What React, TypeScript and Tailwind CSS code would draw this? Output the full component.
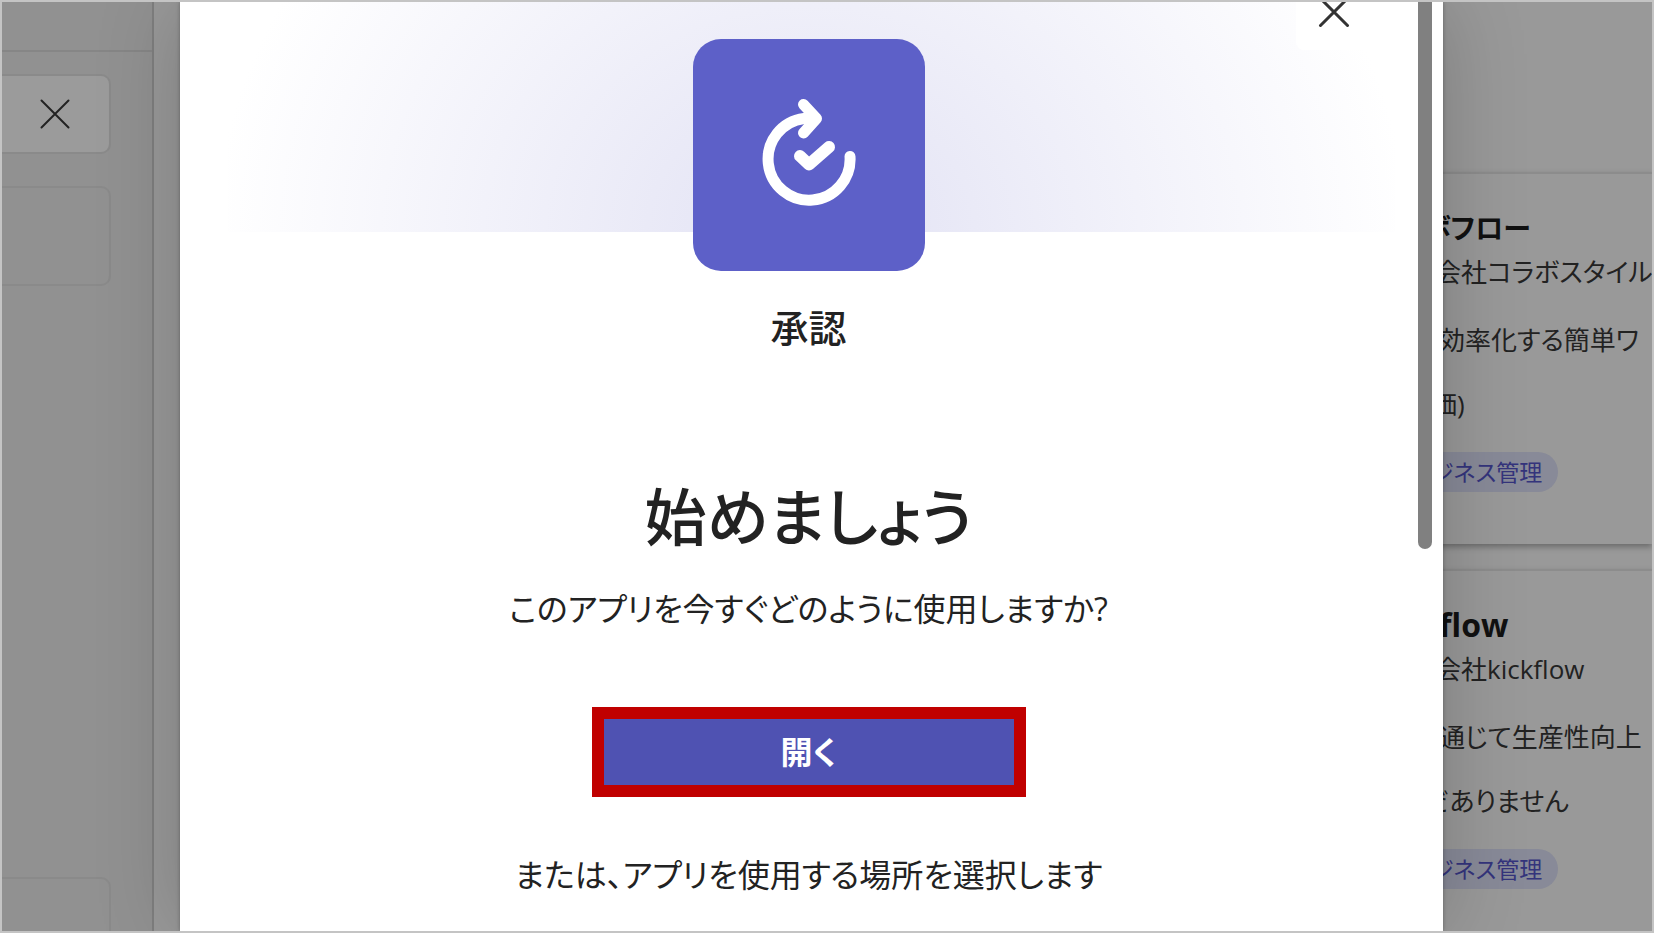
import React from 'react';
import clsx from 'clsx';

type AppCard = {
  name: string;
  nameClass: string;
  org: string;
  summary: string;
  rating: string;
  ratingClass: string;
  tag: string;
};

const cards: AppCard[] = [
  {
    name: 'ボフロー',
    nameClass: 'text-[28px]',
    org: '会社コラボスタイル',
    summary: '効率化する簡単ワ',
    rating: '価)',
    ratingClass: 'pl-2',
    tag: 'ジネス管理'
  },
  {
    name: 'flow',
    nameClass: 'pl-4 text-[32px]',
    org: '会社kickflow',
    summary: '通じて生産性向上',
    rating: 'だありません',
    ratingClass: '',
    tag: 'ジネス管理'
  }
];

const CloseIcon = ({ className }: { className?: string }) => (
  <svg
    viewBox="0 0 32 32"
    className={clsx('size-8', className)}
    fill="none"
    stroke="currentColor"
    strokeLinecap="round"
    aria-hidden="true"
  >
    <path d="M2.5 2.5l27 27M29.5 2.5l-27 27" />
  </svg>
);

const ApprovalsLogo = () => (
  <svg
    viewBox="0 0 232 232"
    className="relative size-[232px] rounded-[28px] bg-[#5d60c8]"
    fill="none"
    stroke="#fff"
    strokeWidth="11"
    strokeLinecap="round"
    strokeLinejoin="round"
    aria-hidden="true"
  >
    <path d="M157 117.500A41 41 0 1 1 111 79.500H120" />
    <path d="M110.500 65.500L123.500 79.500L110.500 94" />
    <path d="M107 117L116 125.500L136 108" strokeWidth="12" />
  </svg>
);

const Sidebar = () => (
  <aside className="flex w-[152px] shrink-0 flex-col border-r-2 border-[#7f7f7f] bg-[#919191]">
    <div className="h-[50px] shrink-0 border-b-2 border-[#868686]" />
    <div className="mt-[22px] flex h-20 w-[109px] shrink-0 items-center justify-end rounded-r-[10px] border-2 border-l-0 border-[#8a8a8a] bg-[#9b9b9b] pr-[38px]">
      <button type="button" aria-label="クリア" className="text-[#222]">
        <CloseIcon className="stroke-2" />
      </button>
    </div>
    <div className="mt-8 h-[100px] w-[109px] shrink-0 rounded-r-[10px] border-2 border-l-0 border-[#8a8a8a]" />
    <div className="mt-auto h-[54px] w-[109px] shrink-0 rounded-tr-[10px] border-2 border-b-0 border-l-0 border-[#8a8a8a]" />
  </aside>
);

const Card = ({ card }: { card: AppCard }) => (
  <article className="flex h-[372px] shrink-0 flex-col items-start border-t-2 border-[#8c8c8c] bg-[#999] pt-[30px] text-[26px] leading-10 whitespace-nowrap text-[#222] shadow-[0_3px_6px_rgba(0,0,0,0.3)]">
    <h3 className={clsx('leading-12 font-bold text-[#111]', card.nameClass)}>
      {card.name}
    </h3>
    <p className="pl-3">{card.org}</p>
    <p className="mt-7 pl-4">{card.summary}</p>
    <p className={clsx('mt-6', card.ratingClass)}>{card.rating}</p>
    <span className="mt-7 rounded-r-full bg-[#888a98] pr-4 pl-2 text-[23px] text-[#34347c]">
      {card.tag}
    </span>
  </article>
);

const Dialog = () => (
  <div
    role="dialog"
    aria-labelledby="app-name"
    className="absolute inset-y-0 right-[209px] left-[178px] overflow-hidden bg-white shadow-[0_0_80px_rgba(0,0,0,0.2),0_0_4px_rgba(0,0,0,0.3)]"
  >
    <div className="absolute inset-x-12 top-0 h-[230px] bg-[radial-gradient(ellipse_51%_220%_at_50%_100%,#e2e2f4,#ffffff)]" />
    <button
      type="button"
      aria-label="閉じる"
      className="absolute -top-7 right-[71px] flex size-[76px] items-center justify-center rounded-lg bg-white text-[#333]"
    >
      <CloseIcon className="stroke-3" />
    </button>
    <div className="absolute top-0 right-[11px] h-[547px] w-[14px] rounded-b-full bg-[#808080]" />

    <div className="flex flex-col items-center pt-[37px] pr-[6px] text-center text-[#222]">
      <ApprovalsLogo />
      <h1 id="app-name" className="mt-7 text-[38px] leading-14 font-medium">
        承認
      </h1>
      <h2 className="mt-[114px] text-[62px] leading-24 font-medium">
        始めましょう
      </h2>
      <p className="mt-5 text-[32px] leading-12">
        このアプリを今すぐどのように使用しますか?
      </p>
      <button
        type="button"
        className="mt-[74px] h-[90px] w-[434px] border-12 border-[#c00000] bg-[#4f52b2] text-[32px] leading-none font-bold text-white"
      >
        開く
      </button>
      <p className="mt-[54px] text-[32px] leading-12">
        または、アプリを使用する場所を選択します
      </p>
    </div>
  </div>
);

export default function App() {
  return (
    <main
      lang="ja"
      className="relative flex h-screen overflow-hidden border-2 border-[#c4c4c4] bg-[#999] font-['Open_Sans','Noto_Sans_CJK_JP',sans-serif] [font-feature-settings:'palt']"
    >
      <Sidebar />
      <section className="ml-auto flex w-[229px] shrink-0 flex-col gap-[25px] overflow-hidden pt-[170px]">
        {cards.map((card) => (
          <Card key={card.name} card={card} />
        ))}
      </section>
      <Dialog />
    </main>
  );
}
